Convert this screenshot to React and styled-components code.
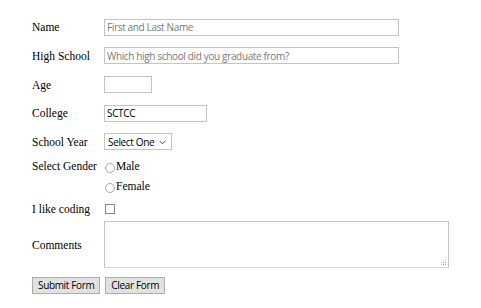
import React from "react";
import styled, { createGlobalStyle } from "styled-components";

const Global = createGlobalStyle`
  html, body { margin: 0; padding: 0; background: #fff; }
  body { font-family: "Liberation Serif", "Times New Roman", serif; font-size: 11px; color: #000; }
`;

const Form = styled.form`
  display: flex;
  flex-direction: column;
  padding: 13px 0 0 32px;
  width: 449px;
`;

const Row = styled.div`
  display: grid;
  grid-template-columns: 72px 1fr;
  align-items: ${(p) => (p.$top ? "start" : "center")};
  height: ${(p) => p.$h}px;
`;

const serifText = `
  font-family: "Liberation Serif", "Times New Roman", serif;
  font-size: 11.5px;
  color: #000;
`;

const Label = styled.label`
  ${serifText}
  white-space: nowrap;
  line-height: ${(p) => p.$lh || 16}px;
`;

const sansField = `
  font-family: "Open Sans", "Noto Sans", sans-serif;
  font-size: 10px;
  letter-spacing: -0.35px;
  color: #000;
  box-sizing: border-box;
  border: 1px solid #c4c4c4;
  background: #fff;
  outline: none;
  margin: 0;
`;

const TextInput = styled.input`
  ${sansField}
  width: ${(p) => p.$w}px;
  height: 17px;
  padding: 0 2px;
  &::placeholder { color: #7a7a7a; opacity: 1; }
`;

const SelectBox = styled.div`
  ${sansField}
  position: relative;
  width: 68px;
  height: 17px;
  display: flex;
  align-items: center;
  padding: 0 3px;
`;

const Chevron = styled.svg`
  position: absolute;
  right: 5px;
  top: 6px;
`;

const RadioGroup = styled.div`
  display: flex;
  flex-direction: column;
`;

const OptionLine = styled.label`
  ${serifText}
  display: flex;
  align-items: center;
  height: 20px;
`;

const Radio = styled.span`
  width: 10px;
  height: 10px;
  box-sizing: border-box;
  border: 1px solid #a8a8a8;
  border-radius: 50%;
  margin: 3px 1px 0 1px;
  background: #fff;
`;

const Check = styled.span`
  display: block;
  width: 10px;
  height: 10px;
  box-sizing: border-box;
  border: 1px solid #8a8a8a;
  background: #fff;
  margin: 1px 0 0 1px;
`;

const TextArea = styled.div`
  position: relative;
  box-sizing: border-box;
  width: 345px;
  height: 47px;
  border: 1px solid #c4c4c4;
  border-bottom-color: #d6d6d6;
  background: #fff;
`;

const Grip = styled.svg`
  position: absolute;
  right: 1px;
  bottom: 1px;
`;

const Buttons = styled.div`
  display: flex;
  gap: 5px;
  padding-top: 10px;
`;

const Button = styled.button`
  font-family: "Open Sans", "Noto Sans", sans-serif;
  font-size: 10px;
  letter-spacing: -0.35px;
  color: #000;
  height: 17px;
  padding: 0 5px;
  background: #e1e1e1;
  border: 1px solid #adadad;
  border-radius: 0;
  margin: 0;
  line-height: 15px;
`;

export default function App() {
  return (
    <>
      <Global />
      <Form onSubmit={(e) => e.preventDefault()}>
        <Row $h={28}>
          <Label>Name</Label>
          <TextInput $w={295} placeholder="First and Last Name" />
        </Row>
        <Row $h={29}>
          <Label>High School</Label>
          <TextInput $w={295} placeholder="Which high school did you graduate from?" />
        </Row>
        <Row $h={29}>
          <Label>Age</Label>
          <TextInput $w={48} />
        </Row>
        <Row $h={28}>
          <Label>College</Label>
          <TextInput $w={103} defaultValue="SCTCC" />
        </Row>
        <Row $h={29}>
          <Label>School Year</Label>
          <SelectBox>
            Select One
            <Chevron width="7" height="5" viewBox="0 0 7 5">
              <path d="M0.5 0.8 L3.5 3.8 L6.5 0.8" fill="none" stroke="#444" strokeWidth="1" />
            </Chevron>
          </SelectBox>
        </Row>
        <Row $h={40} $top>
          <Label $lh={20}>Select Gender</Label>
          <RadioGroup>
            <OptionLine>
              <Radio />
              Male
            </OptionLine>
            <OptionLine>
              <Radio />
              Female
            </OptionLine>
          </RadioGroup>
        </Row>
        <Row $h={25}>
          <Label>I like coding</Label>
          <Check />
        </Row>
        <Row $h={46}>
          <Label>Comments</Label>
          <TextArea>
            <Grip width="6" height="6" viewBox="0 0 6 6">
              <rect x="4" y="0" width="1" height="1" fill="#aaa" />
              <rect x="2" y="2" width="1" height="1" fill="#aaa" />
              <rect x="4" y="2" width="1" height="1" fill="#aaa" />
              <rect x="0" y="4" width="1" height="1" fill="#aaa" />
              <rect x="2" y="4" width="1" height="1" fill="#aaa" />
              <rect x="4" y="4" width="1" height="1" fill="#aaa" />
            </Grip>
          </TextArea>
        </Row>
        <Buttons>
          <Button type="submit">Submit Form</Button>
          <Button type="button">Clear Form</Button>
        </Buttons>
      </Form>
    </>
  );
}
